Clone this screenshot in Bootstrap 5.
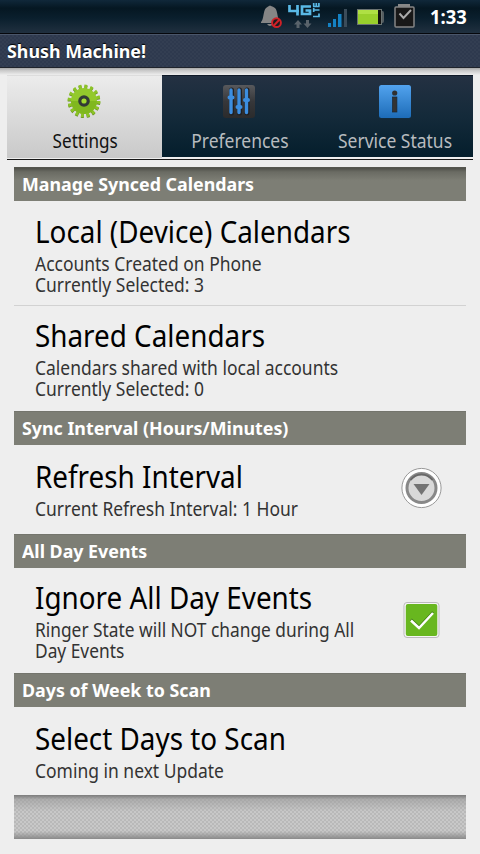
<!DOCTYPE html>
<html lang="en">
<head>
<meta charset="utf-8">
<meta name="viewport" content="width=device-width, initial-scale=1">
<title>Shush Machine!</title>
<link href="https://cdn.jsdelivr.net/npm/bootstrap@5.3.0/dist/css/bootstrap.min.css" rel="stylesheet">
<style>
body{font-family:"Noto Sans","Open Sans",sans-serif;background:#eee;color:#000;height:854px;overflow:hidden}
svg{display:block;flex:none}
.status{height:34px;background:linear-gradient(#10283a,#051722 25%,#0a1f2d 55%,#20303f);border-bottom:1px solid #05070c;color:#fff}
.clock{font-size:19px;font-weight:700;line-height:34px;margin-left:11px;width:42px;white-space:nowrap;transform:scaleX(.97);transform-origin:0 0}
.app-title{height:34px;background:repeating-conic-gradient(#2e394e 0 25%,#333e52 0 50%) 0 0/4px 4px;border-top:1px solid #4a566a;border-bottom:1px solid #20242c;padding-left:7px;color:#fff;font-size:18px;font-weight:700;line-height:32px;text-shadow:0 -1px 1px #000}
.app-title span,.sect span{display:inline-block;transform:scaleX(.99);transform-origin:0 0}
.shade{height:7px;background:linear-gradient(#a9a9a9,#c9c9c9 35%,#eee)}
.tabs{margin:0 7px;height:85px;border-bottom:1px solid #181818}
.tab-item{flex:1 1 0;height:82px;padding-top:6px;color:#b7bbbf;background:linear-gradient(#243142,#142a3a 50%,#041e2c);font-size:19px;line-height:26px;text-decoration:none;border-top:1px solid #101a28}
.tab-item.on{height:83px;color:#111;background:linear-gradient(#ececec,#c9c9c9);border-top-color:#ddd}
.tab-item span{margin-top:6px;transform:scaleX(.92)}
.tab-item.on span{transform:scaleX(.9)}
.prefs{margin:7px 14px 0}
.sect{height:34px;background:#7d7e75;color:#fff;font-size:18px;font-weight:700;line-height:32px;padding-left:7.5px;border-top:1px solid #74756d}
.sect.first{background:linear-gradient(#4f5049,#6a6b63 12%,#7d7e75 38%);border-top-color:#55564f}
.pref{padding:8px 0 0 21px}
.pref h2{font-size:30px;line-height:43px;font-weight:400;margin:0 0 1px;white-space:nowrap;transform:scaleX(.928);transform-origin:0 0}
.pref p{font-size:19px;line-height:21px;margin:0;color:#333;white-space:nowrap;transform:scaleX(.919);transform-origin:0 0}
.txt{width:340px}
.h-a{height:105px;padding-top:9px;border-bottom:1px solid #d2d2d2}
.h-b{height:105px}
.h-c{height:89px;padding-top:10px}
.h-d{height:105px}
.h-d p{transform:scaleX(.912)}
.h-e{height:88px;padding-top:10px}
.foot{height:44px;background:linear-gradient(#7c7c7c,#9b9b9b99 10%,#bbb0 38%,#bbb0 82%,#8a8a8a),repeating-conic-gradient(#b9b9b9 0 25%,#c8c8c8 0 50%) 0 0/4px 4px;}
</style>
<script src="https://cdn.jsdelivr.net/npm/bootstrap@5.3.0/dist/js/bootstrap.bundle.min.js"></script>
</head>
<body>
<header>
<div class="status d-flex justify-content-end pe-2">
<svg width="160" height="33" viewBox="0 0 160 33">
<!-- muted bell -->
<path d="M2 22C5 19 4 11 7 8Q9 6.5 10 6Q11 5 12 6Q14 6.500 16 8C19 11 18 19 21 22V23H2ZM8 24H14Q11 28 8 24Z" fill="#858585"/>
<circle cx="17.500" cy="22.700" r="4.400" fill="#1b1b1e" stroke="#cf2127" stroke-width="2"/><path d="M14.500 26L20.500 19.500" stroke="#cf2127" stroke-width="2"/>
<!-- network badge -->
<g fill="none" stroke="#59b9e6" stroke-width="2.700"><path d="M30.500 5V11H40M38.500 5V15.500M52 6.500H43V14H51V10.500H46.500"/><path stroke-width="1.700" d="M54 16.500H60V13.500M54.700 12V8M54 10H60.500M54.700 6.500V3M57.300 6.500V3M59.900 6.500V3M54 6.500H60.600"/></g>
<path d="M39 20L43 24.500H40.500V28H37.500V24.500H35ZM48.500 28L44.500 23.500H47V20H50V23.500H52.500Z" fill="#59636b"/>
<!-- signal -->
<path fill="#1482c4" d="M69 23h3v4h-3zM74 19h3v8h-3zM79 14h3.500v13H79z"/><path fill="#3b4c5a" d="M85 9h3v18h-3z"/>
<!-- battery -->
<path d="M121 11h2.500q1.500 0 1.500 2v8q0 2-1.500 2H121z" fill="#555d60"/><rect x="98.500" y="9.500" width="24" height="15" fill="#111" stroke="#6b7472"/><rect x="99" y="10" width="20" height="14" fill="#99d02c"/><rect x="99" y="10" width="20" height="4" fill="#afe044"/>
<!-- clipboard -->
<path d="M139 4h12v3h-12z" fill="#888"/><rect x="136" y="7" width="19" height="20" rx="1" fill="#181818" stroke="#858585" stroke-width="1.500"/><path d="M140.500 13.500L144.500 18L152 10" fill="none" stroke="#aaa" stroke-width="2"/>
</svg>
<div class="clock">1:33</div>
</div>
<div class="app-title"><span>Shush Machine!</span></div>
<div class="shade"></div>
</header>
<nav class="tabs d-flex">
<a class="tab-item on d-flex flex-column align-items-center">
<svg width="36" height="40" viewBox="-17 -19 36 40"><circle r="14.300" fill="none" stroke="#648a20" stroke-width="4" stroke-dasharray="2.800 2.816"  transform="translate(0 .8)"/><circle r="14.300" fill="none" stroke="#8cc327" stroke-width="4.200" stroke-dasharray="2.800 2.816"/><circle r="13" fill="#93c92c"/><path d="M-13 0A13 13 0 0 0 13 0Z" fill="#80b81f"/><circle r="4.200" fill="#93c92c" stroke="#333b36" stroke-width="3.200"/><circle r="2.300" fill="#a4dc31"/></svg>
<span>Settings</span></a>
<a class="tab-item d-flex flex-column align-items-center">
<svg width="36" height="40" viewBox="1 0 36 40"><defs><linearGradient id="g1" x2="0" y2="1"><stop stop-color="#58595c"/><stop offset=".5" stop-color="#36373a"/><stop offset="1" stop-color="#2b2b2c"/></linearGradient><linearGradient id="g2" x2="0" y2="1"><stop stop-color="#52a3ee"/><stop offset="1" stop-color="#1d6cb8"/></linearGradient></defs>
<rect x="2" y="3" width="32" height="33" rx="3" fill="url(#g1)"/><g stroke="#202022" stroke-width="5" stroke-linecap="round"><path d="M10.500 8V31M18.500 8V31M26 8V31"/></g><g stroke="#3c8ee0" stroke-width="3.400" stroke-linecap="round"><path d="M10 8V30.500M18 8V30.500M25.500 8V30.500"/><path stroke-width="4" d="M8.500 15.500H11.500M16.500 25H19.500M24 18H27"/></g></svg>
<span>Preferences</span></a>
<a class="tab-item d-flex flex-column align-items-center">
<svg width="36" height="40" viewBox="0 0 36 40"><rect x="2" y="4" width="32" height="33" rx="2.500" fill="#122c3f"/><rect x="2" y="3" width="32" height="33" rx="2.500" fill="url(#g2)"/><circle cx="17.700" cy="11" r="2.600" fill="#303030"/><rect x="15.500" y="15" width="4.400" height="15" fill="#333" stroke="#1b2731" stroke-width=".7"/></svg>
<span>Service Status</span></a>
</nav>
<main class="prefs">
<div class="sect first"><span>Manage Synced Calendars</span></div>
<section class="pref h-a"><h2>Local (Device) Calendars</h2><p>Accounts Created on Phone<br>Currently Selected: 3</p></section>
<section class="pref h-b"><h2>Shared Calendars</h2><p>Calendars shared with local accounts<br>Currently Selected: 0</p></section>
<div class="sect"><span>Sync Interval (Hours/Minutes)</span></div>
<section class="pref h-c d-flex justify-content-between"><div class="txt"><h2>Refresh Interval</h2><p>Current Refresh Interval: 1 Hour</p></div>
<svg class="mt-2 me-4" width="42" height="50" viewBox="0 1 42 50"><circle cx="21.500" cy="26" r="19.600" fill="#fff" stroke="#999"/><circle cx="21.500" cy="26" r="14.500" fill="#d9d9d9" stroke="#888" stroke-width="3"/><path d="M10.500 18A13.600 13.600 0 0 1 32.500 18" fill="none" stroke="#686868" stroke-width="2"/><path d="M13.500 22H29.500L21.500 33Z" fill="#737373"/></svg></section>
<div class="sect"><span>All Day Events</span></div>
<section class="pref h-d d-flex justify-content-between"><div class="txt"><h2>Ignore All Day Events</h2><p>Ringer State will NOT change during All<br>Day Events</p></div>
<svg class="mt-4 me-4" width="40" height="44" viewBox="0 0 40 44"><rect x="2" y="2.500" width="35" height="35" rx="3" fill="#f5f5f5" stroke="#bbb"/><rect x="3.800" y="4" width="31.500" height="32" rx="2" fill="#68b71f"/><path d="M9 19.500L17 27L31 12" fill="none" stroke="#3e7c10" stroke-width="2.500"/><path d="M9 20.500L17 28L31 13" fill="none" stroke="#fff" stroke-width="2.500"/></svg></section>
<div class="sect"><span>Days of Week to Scan</span></div>
<section class="pref h-e"><h2>Select Days to Scan</h2><p>Coming in next Update</p></section>
<div class="foot"></div>
</main>
</body>
</html>
